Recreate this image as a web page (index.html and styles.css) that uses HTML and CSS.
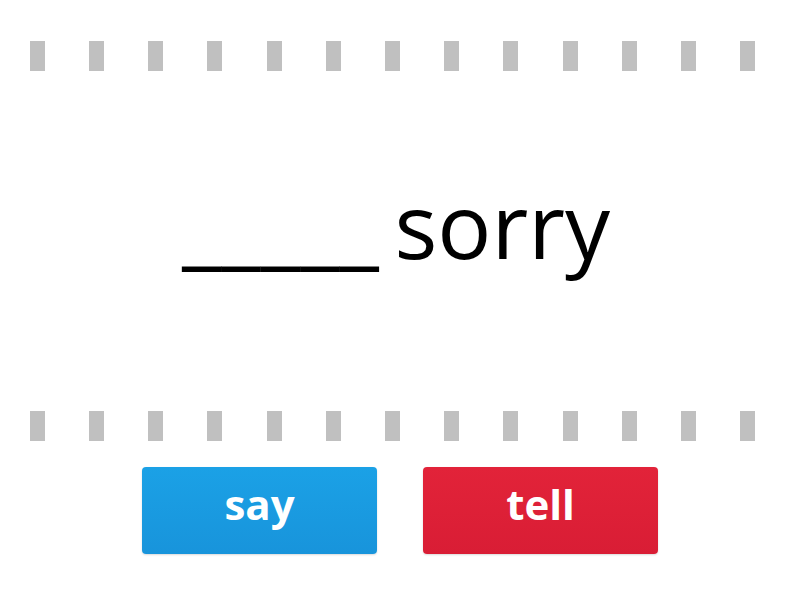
FILE: index.html
```html
<!DOCTYPE html>
<html lang="en">
  <head>
    <meta charset="utf-8" />
    <title>say / tell</title>
    <link rel="stylesheet" href="styles.css">
  </head>
  <body>
    <div class="card">
      <div class="dashes">
        <span></span><span></span><span></span><span></span><span></span><span></span><span></span>
        <span></span><span></span><span></span><span></span><span></span><span></span>
      </div>
      <div class="question">_____ sorry</div>
      <div class="dashes">
        <span></span><span></span><span></span><span></span><span></span><span></span><span></span>
        <span></span><span></span><span></span><span></span><span></span><span></span>
      </div>
      <div class="answers">
        <button type="button" class="answer blue">say</button>
        <button type="button" class="answer red">tell</button>
      </div>
    </div>
  </body>
</html>
```

FILE: styles.css
```css
body {
  margin: 0;
  font-family: "Open Sans", Arial, sans-serif;
  background: #fff;
}
.card {
  width: 800px;
  height: 600px;
  display: flex;
  flex-direction: column;
  align-items: center;
}
.dashes {
  display: flex;
  gap: 44.2px;
  margin-top: 41px;
  margin-right: 15px;
}
.dashes span {
  width: 15px;
  height: 30px;
  background-color: #c0c0c0;
}
.question {
  height: 299px;
  font-size: 90px;
  color: #000;
  line-height: 1;
  padding-top: 108px;
  padding-right: 8px;
  word-spacing: -8px;
  box-sizing: border-box;
}
.card .dashes:nth-of-type(2) {
  margin-top: 0;
}
.answers {
  display: flex;
  gap: 46px;
  margin-top: 26px;
}
.answer {
  width: 235px;
  height: 87px;
  border: none;
  border-radius: 4px;
  color: #fff;
  font-family: "Open Sans", Arial, sans-serif;
  font-weight: 700;
  font-size: 42px;
  padding: 0 0 14px;
  box-shadow: 0 1px 2px rgba(0, 0, 0, 0.15);
}
.blue {
  background: linear-gradient(#1ba1e6, #1894db);
}
.red {
  background: linear-gradient(#e22339, #d91d35);
}
```
